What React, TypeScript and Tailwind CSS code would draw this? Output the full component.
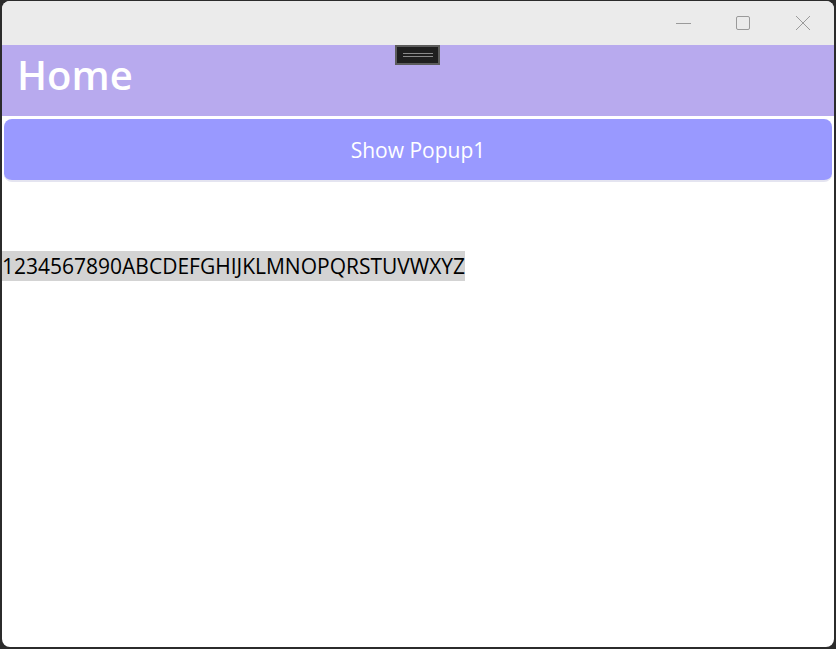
export default function App() {
  return (
    <div className="w-[836px] h-[649px] bg-[#2b2b2b] p-[2px] pt-[1px]" style={{ fontFamily: '"Open Sans", "Noto Sans", sans-serif' }}>
      <div className="relative w-full h-full bg-white rounded-[8px] overflow-hidden flex flex-col">
        {/* title bar */}
        <div className="h-[44px] bg-[#ebebeb] flex justify-end items-center shrink-0">
          <div className="w-[60px] h-full flex items-center justify-center">
            <div className="w-[15px] h-px bg-[#9a9a9a]" />
          </div>
          <div className="w-[60px] h-full flex items-center justify-center">
            <div className="w-[14px] h-[14px] border border-[#9a9a9a] rounded-[2px]" />
          </div>
          <div className="w-[60px] h-full flex items-center justify-center mr-[1px]">
            <svg width="16" height="16" viewBox="0 0 16 16" className="stroke-[#9a9a9a]">
              <path d="M1 1 L15 15 M15 1 L1 15" strokeWidth="1" />
            </svg>
          </div>
        </div>

        {/* grip */}
        <div className="absolute left-[393px] top-[44px] w-[45px] h-[20px] bg-[#1f1f1f] border-2 border-[#5c5c5c] flex flex-col items-center justify-center gap-[2px]">
          <div className="w-[30px] h-px bg-[#8a8a8a]" />
          <div className="w-[30px] h-px bg-[#8a8a8a]" />
        </div>

        {/* header */}
        <div className="h-[71px] bg-[#b8aaee] px-[15px] pt-[8px] shrink-0">
          <h1 className="text-white text-[40px] font-semibold leading-[44px]">Home</h1>
        </div>

        <div className="px-[2px] pt-[3px]">
          <button className="w-full h-[63px] pt-[2px] bg-[#9999ff] rounded-[8px] border-b-2 border-[#e4e4f0] text-white text-[21px]">
            Show Popup1
          </button>
        </div>

        <div className="mt-[69px]">
          <span className="inline-block bg-[#d3d3d3] text-black text-[21px] leading-[30px]">
            1234567890ABCDEFGHIJKLMNOPQRSTUVWXYZ
          </span>
        </div>
      </div>
    </div>
  );
}
